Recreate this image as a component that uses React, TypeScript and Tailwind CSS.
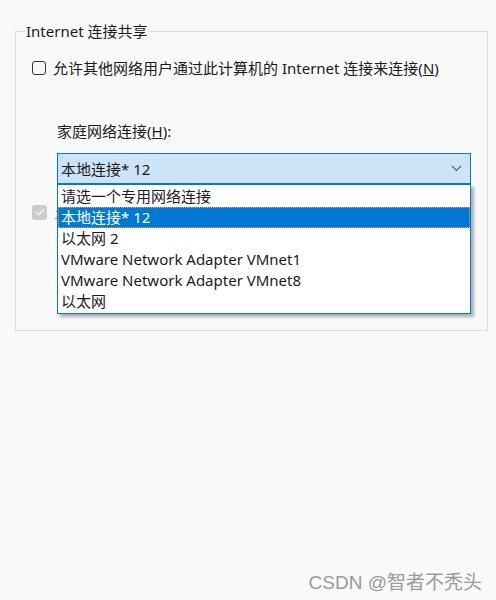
import React from "react";

const font = { fontFamily: '"Noto Sans", "Noto Sans CJK SC", sans-serif' };

const options = [
  "请选一个专用网络连接",
  "本地连接* 12",
  "以太网 2",
  "VMware Network Adapter VMnet1",
  "VMware Network Adapter VMnet8",
  "以太网",
];

const Checkbox: React.FC<{ disabled?: boolean }> = ({ disabled }) =>
  disabled ? (
    <span className="flex h-[15px] w-[15px] shrink-0 items-center justify-center rounded-[3px] bg-[#cccccc]">
      <svg width="10" height="8" viewBox="0 0 10 8" fill="none">
        <path d="M1 4l2.7 2.7L9 1.2" stroke="#f4f4f4" strokeWidth="1.4" />
      </svg>
    </span>
  ) : (
    <span className="h-[14px] w-[14px] shrink-0 rounded-[3px] border border-[#333] bg-[#f6f6f6]" />
  );

export default function App() {
  return (
    <div
      className="relative h-[600px] w-[496px] bg-[#f9f9f9] text-[15px] leading-[20px] text-[#1a1a1a]"
      style={font}
    >
      <div className="pl-[15px] pt-[21px]">
        <fieldset className="h-[310px] w-[466px] border border-[#dcdcdc]">
          <legend className="ml-[9px] px-[1px]">Internet 连接共享</legend>

          <div className="px-[16px]">
            <label className="mt-[17px] flex items-center gap-[7px]">
              <Checkbox />
              <span>
                允许其他网络用户通过此计算机的 Internet 连接来连接(<u>N</u>)
              </span>
            </label>

            <div className="ml-[25px] mt-[43px]">
              家庭网络连接(<u>H</u>):
            </div>

            <div className="relative ml-[25px] mt-[12px] w-[414px]">
              <div className="flex h-[31px] items-center justify-between border border-[#0078d7] bg-[#cce4f7] pl-[3px] pr-[8px]">
                <span>本地连接* 12</span>
                <svg width="11" height="7" viewBox="0 0 11 7" fill="none">
                  <path d="M1 1l4.5 4.5L10 1" stroke="#5f5f5f" strokeWidth="1.2" />
                </svg>
              </div>

              <ul className="absolute left-0 top-full z-10 w-[414px] border border-[#0078d7] bg-white py-[1px] shadow-[3px_3px_3px_rgba(0,0,0,0.3)]">
                {options.map((o, i) => (
                  <li
                    key={o}
                    className={
                      i === 1
                        ? "h-[21px] border border-dotted border-[#f0a050] bg-[#0078d7] pl-[2px] leading-[19px] text-white"
                        : "h-[21px] pl-[3px] leading-[21px]"
                    }
                  >
                    {o}
                  </li>
                ))}
              </ul>
            </div>

            <label className="mt-[18px] flex items-center gap-[7px] text-[#9d9d9d]">
              <Checkbox disabled />
              <span>允许其他网络用户控制或禁用共享的 Internet 连接(O)</span>
            </label>
          </div>
        </fieldset>
      </div>

      <div
        className="absolute bottom-[7px] right-[14px] text-[19px] text-[#9a9a9a]"
        style={{ fontFamily: '"Liberation Sans", "Noto Sans CJK SC", sans-serif' }}
      >
        CSDN @智者不秃头
      </div>
    </div>
  );
}
